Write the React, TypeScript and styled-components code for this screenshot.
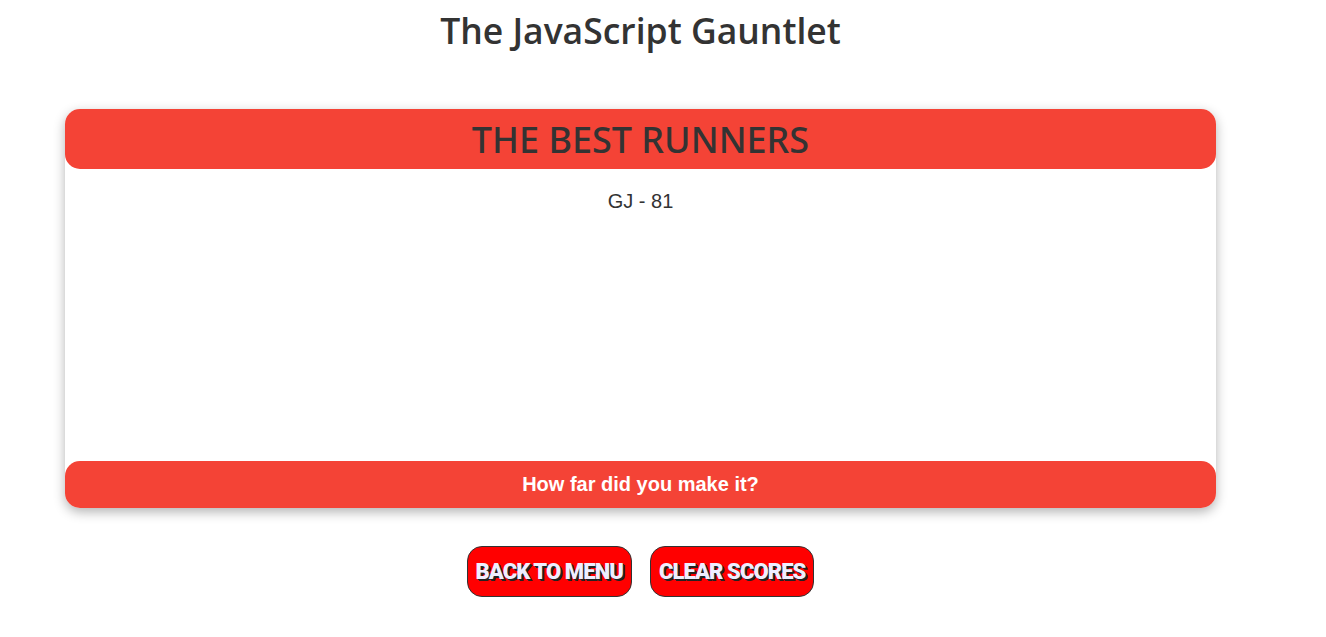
import React from "react";
import styled, { createGlobalStyle } from "styled-components";

const GlobalStyle = createGlobalStyle`
  body {
    margin: 0;
    background: #fff;
    font-family: "Open Sans", "Noto Sans", sans-serif;
    color: #333;
  }
`;

const scores = [{ initials: "GJ", score: 81 }];

const App = () => {
  return (
    <Page>
      <GlobalStyle />
      <Title>The JavaScript Gauntlet</Title>
      <Card>
        <CardHeader>THE BEST RUNNERS</CardHeader>
        <ScoreList>
          {scores.map((s) => (
            <ScoreItem key={s.initials}>
              {s.initials} - {s.score}
            </ScoreItem>
          ))}
        </ScoreList>
        <CardFooter>How far did you make it?</CardFooter>
      </Card>
      <BtnRow>
        <Button>BACK TO MENU</Button>
        <Button>CLEAR SCORES</Button>
      </BtnRow>
    </Page>
  );
};

export default App;

const Page = styled.div`
  width: 1281px;
  display: flex;
  flex-direction: column;
  align-items: center;
`;

const Title = styled.h1`
  margin: 6px 0 0;
  font-size: 35.5px;
  font-weight: 600;
  color: #333;
  line-height: 48px;
`;

const Card = styled.div`
  width: 1151px;
  height: 399px;
  margin-top: 55px;
  display: flex;
  flex-direction: column;
  background: #fff;
  border-radius: 15px;
  box-shadow: 0 4px 12px rgba(0, 0, 0, 0.3);
`;

const CardHeader = styled.div`
  height: 60px;
  display: flex;
  align-items: center;
  justify-content: center;
  background: #f44336;
  border-radius: 15px;
  font-family: "Noto Sans", "Open Sans", sans-serif;
  font-size: 36px;
  font-weight: 500;
  color: #333;
`;

const ScoreList = styled.ul`
  flex: 1;
  list-style: none;
  margin: 0;
  padding: 20px 0 0;
  text-align: center;
`;

const ScoreItem = styled.li`
  font-family: "Liberation Sans Narrow", "Liberation Sans", sans-serif;
  font-size: 20px;
  color: #333;
  line-height: 24px;
`;

const CardFooter = styled.div`
  height: 47px;
  display: flex;
  align-items: center;
  justify-content: center;
  background: #f44336;
  border-radius: 15px;
  font-family: "Liberation Sans", Arial, sans-serif;
  font-weight: bold;
  font-size: 20px;
  color: #fff;
`;

const BtnRow = styled.div`
  margin-top: 38px;
  display: flex;
  gap: 18px;
`;

const Button = styled.button`
  height: 51px;
  padding: 0 8px;
  background: #ff0000;
  border: 1px solid #333;
  border-radius: 15px;
  font-family: Roboto, "Liberation Sans", sans-serif;
  font-weight: 900;
  font-size: 22px;
  letter-spacing: -0.9px;
  color: #eef;
  text-shadow: 1px 1px 0 #222, 2px 2px 0 #222;
  cursor: pointer;
`;
